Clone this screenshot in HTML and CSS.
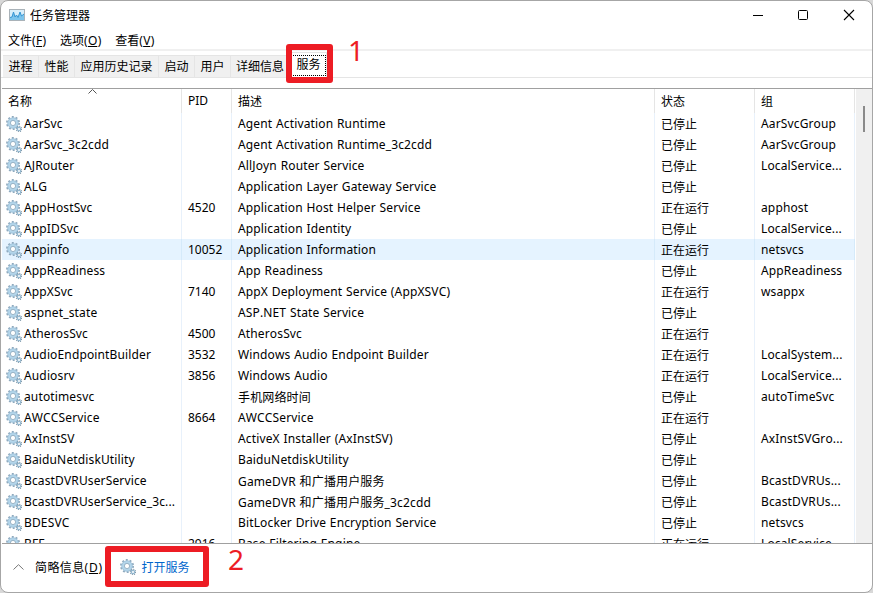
FILE: index.html
```
<!DOCTYPE html>
<html lang="zh-CN">
<head>
  <meta charset="UTF-8">
  <meta name="viewport" content="width=device-width, initial-scale=1.0">
  <title>任务管理器</title>
  <link rel="stylesheet" href="styles.css">
</head>
<body>
  <svg class="defs" width="0" height="0">
    <symbol id="gear" viewBox="0 0 16 16">
      <circle cx="7" cy="7" r="6" fill="none" stroke="#8fa9bd" stroke-width="2" stroke-dasharray="1.9 1.87"/>
      <circle cx="7" cy="7" r="4" fill="#fff" stroke="#b3d5ea" stroke-width="3"/>
      <circle cx="7" cy="7" r="5.3" fill="none" stroke="#93b7d0" stroke-width=".6"/>
      <circle cx="7" cy="7" r="2.6" fill="#fff" stroke="#7798b0" stroke-width=".7"/>
      <circle cx="13" cy="13" r="2.6" fill="none" stroke="#8199ab" stroke-width="1.4" stroke-dasharray="1 1.04"/>
      <circle cx="13" cy="13" r="1.6" fill="#fff" stroke="#93b8d0" stroke-width="1.2"/>
    </symbol>
  </svg>

  <div class="window">
    <header class="titlebar">
      <svg class="app-icon" width="16" height="12" viewBox="0 0 16 12">
        <rect x=".5" y=".5" width="15" height="11" fill="#d8eefa" stroke="#a9b2b8"/>
        <path d="M1 8.500L3 8L4.500 3L6 8L7.500 6L9 8.500L11 3L12.500 7L15 5V11H1Z" fill="#7cc4ec"/>
        <path d="M1 8.500L3 8L4.500 3L6 8L7.500 6L9 8.500L11 3L12.500 7L15 5" fill="none" stroke="#3595d3"/>
      </svg>
      <span class="title">任务管理器</span>
      <div class="controls">
        <svg width="10" height="12" viewBox="0 0 10 12"><path d="M1 6.500H11" stroke="#000"/></svg>
        <svg width="10" height="12" viewBox="0 0 10 12"><rect x=".5" y="1.500" width="9" height="9" rx="1" fill="none" stroke="#000"/></svg>
        <svg width="10" height="12" viewBox="0 0 10 12"><path d="M0 1L10 11M10 1L0 11" stroke="#000" stroke-width="1.100"/></svg>
      </div>
    </header>

    <nav class="menu">
      <span>文件(<u>F</u>)</span>
      <span>选项(<u>O</u>)</span>
      <span>查看(<u>V</u>)</span>
    </nav>

    <div class="tabs">
      <div class="tab">进程</div>
      <div class="tab">性能</div>
      <div class="tab tab-history">应用历史记录</div>
      <div class="tab">启动</div>
      <div class="tab">用户</div>
      <div class="tab tab-details">详细信息</div>
      <div class="tab active"><span>服务</span></div>
    </div>

    <main class="list">
      <div class="table">
        <div class="row head">
          <div class="cell name"><span>名称</span><svg class="sort" width="9" height="5" viewBox="0 0 9 5"><path d="M.5 4.500L4.500 .5L8.500 4.500" fill="none" stroke="#555"/></svg></div>
          <div class="cell pid">PID</div>
          <div class="cell desc">描述</div>
          <div class="cell status">状态</div>
          <div class="cell group">组</div>
        </div>
        <div id="rows"></div>
      </div>
      <div class="scrollbar"><div class="thumb"></div></div>
    </main>

    <footer class="footer">
      <svg class="chevron" width="11" height="6" viewBox="0 0 11 6"><path d="M.5 5.500L5.500 .7L10.500 5.500" fill="none" stroke="#777"/></svg>
      <span class="brief">简略信息(<u>D</u>)</span>
      <span class="divider"></span>
      <svg class="gear" width="16" height="16"><use href="#gear"/></svg>
      <a class="open">打开服务</a>
    </footer>
  </div>

  <!-- Step markers -->
  <div class="mark mark-tab"></div>
  <div class="mark mark-open"></div>
  <span class="step step-one">1</span>
  <span class="step step-two">2</span>

  <script src="script.js"></script>
</body>
</html>
```
FILE: styles.css
```
body {
  margin: 0;
  height: 593px;
  overflow: hidden;
  background: #d8d8d8;
  color: #000;
  font-family: "Noto Sans", "Noto Sans CJK SC", sans-serif;
  font-size: 12px;
  font-kerning: none;
}

.defs {
  position: absolute;
}

.window {
  box-sizing: border-box;
  width: 873px;
  height: 593px;
  display: flex;
  flex-direction: column;
  background: #fff;
  border: 1px solid #a6a6a6;
  border-radius: 8px;
  overflow: hidden;
}

.titlebar {
  height: 28px;
  display: flex;
  align-items: center;
  padding: 0 18px 0 8px;
}

.title {
  margin-left: 5px;
}

.controls {
  margin-left: auto;
  display: flex;
  gap: 36px;
}

.controls svg {
  overflow: visible;
}

.menu {
  height: 16px;
  display: flex;
  align-items: center;
  gap: 14px;
  padding: 4px 0 0 7px;
  border-bottom: 2px solid #f0f0f0;
}

.menu span {
  line-height: 16px;
}

.menu u,
.brief u {
  padding: 0 .3px;
}

.tabs {
  height: 26px;
  display: flex;
  align-items: flex-end;
  padding-left: 2px;
  border-bottom: 1px solid #e5e5e5;
}

.tab {
  box-sizing: border-box;
  width: 36px;
  height: 22px;
  line-height: 21px;
  text-align: center;
  white-space: nowrap;
  background: #f0f0f0;
  border: 1px solid #e5e5e5;
  border-width: 1px 1px 0 0;
}

.tab-history {
  width: 84px;
}

.tab-details {
  width: 59px;
}

.tab.active {
  width: 37px;
  height: 25px;
  background: #fff;
  padding: 2px 0 1px 1px;
}

.tab.active span {
  display: block;
  height: 19px;
  line-height: 18px;
  border: 1px dotted #000;
}

.list {
  height: 454px;
  display: flex;
  margin: 10px 0 0 1px;
  border-top: 1px solid #a0a0a0;
  border-bottom: 1px solid #a0a0a0;
  overflow: hidden;
}

.table {
  width: 854px;
}

.row {
  height: 21px;
  width: 853px;
  display: flex;
}

.cell {
  box-sizing: border-box;
  display: flex;
  align-items: center;
  padding-left: 6px;
  border-right: 1px solid #e8f1fb;
  white-space: pre;
}

.name {
  width: 180px;
  padding-left: 4px;
  letter-spacing: .14px;
}

.pid {
  width: 50px;
}

.desc {
  width: 423px;
  letter-spacing: .14px;
  word-spacing: .5px;
}

.status {
  width: 100px;
}

.group {
  width: 100px;
  letter-spacing: .14px;
}

.head {
  height: 24px;
}

.head .cell {
  border-color: #e5e5e5;
  position: relative;
  padding-bottom: 1px;
  letter-spacing: 0;
}

.head .name {
  padding-left: 6px;
}

.sort {
  position: absolute;
  left: 86px;
  top: 0;
}

.row.selected {
  background: #e5f3ff;
}

.row.selected .cell {
  border-color: #d5eafa;
}

.row .gear {
  margin: 0 2px 0 0;
}

.scrollbar {
  width: 16px;
  margin-left: auto;
  background: #f0f0f0;
}

.thumb {
  width: 2px;
  height: 26px;
  margin: 17px 0 0 7px;
  background: #8a8a8a;
}

.footer {
  flex: 1;
  display: flex;
  align-items: center;
  padding: 0 0 2px 12px;
}

.brief {
  margin-left: 11px;
  letter-spacing: .4px;
}

.divider {
  width: 1px;
  height: 15px;
  margin: 0 9px 0 8px;
  background: #ddd;
}

.open {
  margin-left: 5px;
  color: #0066cc;
}

.mark {
  position: absolute;
  box-sizing: border-box;
  border: 6px solid #ed1c24;
  border-radius: 3px;
}

.mark-tab {
  left: 286px;
  top: 44px;
  width: 47px;
  height: 39px;
}

.mark-open {
  left: 105px;
  top: 546px;
  width: 104px;
  height: 41px;
}

.step {
  position: absolute;
  color: #ed1c24;
  font-size: 28px;
  line-height: 30px;
}

.step-one {
  left: 348px;
  top: 35px;
}

.step-two {
  left: 228px;
  top: 544px;
}
```
FILE: script.js
```
const STOPPED = "已停止";
const RUNNING = "正在运行";

// name, pid, description, status, group
const services = [
  ["AarSvc", "", "Agent Activation Runtime", STOPPED, "AarSvcGroup"],
  ["AarSvc_3c2cdd", "", "Agent Activation Runtime_3c2cdd", STOPPED, "AarSvcGroup"],
  ["AJRouter", "", "AllJoyn Router Service", STOPPED, "LocalService..."],
  ["ALG", "", "Application Layer Gateway Service", STOPPED, ""],
  ["AppHostSvc", "4520", "Application Host Helper Service", RUNNING, "apphost"],
  ["AppIDSvc", "", "Application Identity", STOPPED, "LocalService..."],
  ["Appinfo", "10052", "Application Information", RUNNING, "netsvcs"],
  ["AppReadiness", "", "App Readiness", STOPPED, "AppReadiness"],
  ["AppXSvc", "7140", "AppX Deployment Service (AppXSVC)", RUNNING, "wsappx"],
  ["aspnet_state", "", "ASP.NET State Service", STOPPED, ""],
  ["AtherosSvc", "4500", "AtherosSvc", RUNNING, ""],
  ["AudioEndpointBuilder", "3532", "Windows Audio Endpoint Builder", RUNNING, "LocalSystem..."],
  ["Audiosrv", "3856", "Windows Audio", RUNNING, "LocalService..."],
  ["autotimesvc", "", "手机网络时间", STOPPED, "autoTimeSvc"],
  ["AWCCService", "8664", "AWCCService", RUNNING, ""],
  ["AxInstSV", "", "ActiveX Installer (AxInstSV)", STOPPED, "AxInstSVGro..."],
  ["BaiduNetdiskUtility", "", "BaiduNetdiskUtility", STOPPED, ""],
  ["BcastDVRUserService", "", "GameDVR 和广播用户服务", STOPPED, "BcastDVRUs..."],
  ["BcastDVRUserService_3c...", "", "GameDVR 和广播用户服务_3c2cdd", STOPPED, "BcastDVRUs..."],
  ["BDESVC", "", "BitLocker Drive Encryption Service", STOPPED, "netsvcs"],
  ["BFE", "2916", "Base Filtering Engine", RUNNING, "LocalService..."]
];

const columns = ["name", "pid", "desc", "status", "group"];
const gear = '<svg class="gear" width="16" height="16"><use href="#gear"/></svg>';

document.getElementById("rows").innerHTML = services.map(service => {
  const cells = service.map((text, i) =>
    `<div class="cell ${columns[i]}">${i === 0 ? gear : ""}<span>${text}</span></div>`
  );
  const selected = service[0] === "Appinfo" ? " selected" : "";
  return `<div class="row${selected}">${cells.join("")}</div>`;
}).join("");
```
